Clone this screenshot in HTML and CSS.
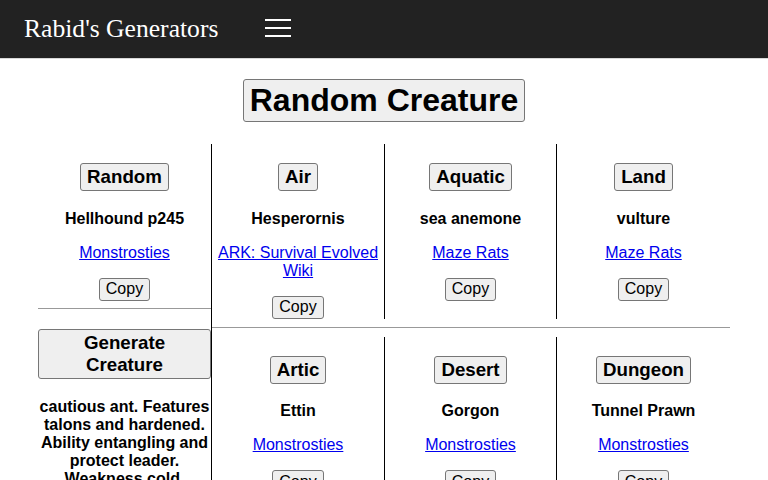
FILE: index.html
```html
<!DOCTYPE html>
<html lang="en">
<head>
<meta charset="utf-8">
<title>Random Creature</title>
<link rel="stylesheet" href="styles.css">
</head>
<body>
<nav class="navbar">
  <span class="brand">Rabid's Generators</span>
  <button class="toggler" aria-label="Toggle navigation"><span></span><span></span><span></span></button>
</nav>
<main class="container">
  <div class="title"><button class="title-btn">Random Creature</button></div>
  <div class="layout">
    <aside class="side">
      <div class="cell">
        <button class="cat-btn">Random</button>
        <p class="name">Hellhound p245</p>
        <a class="src" href="#">Monstrosties</a>
        <button class="copy">Copy</button>
      </div>
      <hr class="side-hr">
      <button class="generate">Generate Creature</button>
      <p class="desc">cautious ant. Features talons and hardened. Ability entangling and protect leader. Weakness cold.</p>
    </aside>
    <section class="biomes">
      <div class="row">
        <div class="cell">
          <button class="cat-btn">Air</button>
          <p class="name">Hesperornis</p>
          <a class="src" href="#">ARK: Survival Evolved Wiki</a>
          <button class="copy">Copy</button>
        </div>
        <div class="cell bordered">
          <button class="cat-btn">Aquatic</button>
          <p class="name">sea anemone</p>
          <a class="src" href="#">Maze Rats</a>
          <button class="copy">Copy</button>
        </div>
        <div class="cell bordered">
          <button class="cat-btn">Land</button>
          <p class="name">vulture</p>
          <a class="src" href="#">Maze Rats</a>
          <button class="copy">Copy</button>
        </div>
      </div>
      <hr class="row-hr">
      <div class="row">
        <div class="cell">
          <button class="cat-btn">Artic</button>
          <p class="name">Ettin</p>
          <a class="src" href="#">Monstrosties</a>
          <button class="copy">Copy</button>
        </div>
        <div class="cell bordered">
          <button class="cat-btn">Desert</button>
          <p class="name">Gorgon</p>
          <a class="src" href="#">Monstrosties</a>
          <button class="copy">Copy</button>
        </div>
        <div class="cell bordered">
          <button class="cat-btn">Dungeon</button>
          <p class="name">Tunnel Prawn</p>
          <a class="src" href="#">Monstrosties</a>
          <button class="copy">Copy</button>
        </div>
      </div>
    </section>
  </div>
</main>
</body>
</html>
```
FILE: styles.css
```css
* { box-sizing: border-box; }
body {
  margin: 0;
  font-family: "Liberation Sans", Arial, sans-serif;
  font-size: 16px;
  color: #000;
  background: #fff;
}
.navbar {
  height: 59px;
  background: #222;
  border-bottom: 1px solid #d9d9d9;
  display: flex;
  align-items: center;
  padding-left: 24px;
}
.brand {
  font-family: "Liberation Serif", "Times New Roman", serif;
  font-size: 25.6px;
  color: #fff;
}
.toggler {
  margin-left: 47px;
  margin-top: -2px;
  width: 26px;
  padding: 0;
  border: 0;
  background: none;
  display: flex;
  flex-direction: column;
  gap: 6px;
}
.toggler span {
  display: block;
  height: 2px;
  background: #fff;
}
button {
  font-family: "Liberation Sans", Arial, sans-serif;
  color: #000;
  background: #efefef;
  border: 1px solid #767676;
  border-radius: 3px;
  padding: 2px 6px;
}
.container {
  width: 692px;
  margin: 0 auto;
}
.title {
  display: flex;
  justify-content: center;
  margin: 20px 0 22px;
}
.title-btn {
  font-size: 32px;
  font-weight: bold;
}
.layout {
  display: grid;
  grid-template-columns: 174px 518px;
}
.side {
  border-right: 1px solid #000;
}
.cell {
  display: flex;
  flex-direction: column;
  align-items: center;
  text-align: center;
  padding-top: 19px;
}
.cat-btn {
  font-size: 18.72px;
  font-weight: bold;
}
.name {
  margin: 18.5px 0 0;
  font-weight: bold;
}
.src {
  margin-top: 16px;
  color: #0000ee;
}
.copy {
  margin-top: 16px;
  font-size: 16px;
  padding: 1.5px 6px;
}
.side-hr {
  margin: 7.5px 0 0;
  border: 0;
  border-top: 1px solid #999;
}
.generate {
  display: block;
  width: 100%;
  margin-top: 20px;
  font-size: 18.72px;
  font-weight: bold;
}
.desc {
  margin: 18.5px 0 0;
  font-weight: bold;
  text-align: center;
  line-height: 18px;
}
.row {
  display: grid;
  grid-template-columns: 172px 172px 174px;
}
.bordered {
  border-left: 1px solid #000;
}
.row-hr {
  margin: 8px 0 9px;
  border: 0;
  border-top: 1px solid #999;
}
```
